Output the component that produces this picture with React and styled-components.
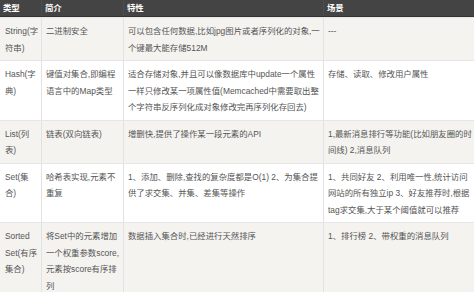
import React from 'react';
import styled, { createGlobalStyle } from 'styled-components';

const GlobalStyle = createGlobalStyle`
  html, body {
    margin: 0;
    padding: 0;
    background: #ffffff;
  }
  body {
    font-family: "Liberation Sans", "Noto Sans CJK SC", sans-serif;
  }
`;

const Table = styled.div`
  width: 474px;
  font-size: 8.4px;
  color: #555555;
`;

const Row = styled.div`
  display: grid;
  grid-template-columns: 41px 82px 200px 151px;
  background: ${(p) => (p.$shade ? '#f4f3f0' : '#ffffff')};
  border-top: 1px solid #e6e6e6;
`;

const HeadRow = styled(Row)`
  height: 17px;
  background: #444444;
  border-top: none;
  border-bottom: 1px solid #333333;
  box-sizing: border-box;
`;

const HeadCell = styled.div`
  color: #ffffff;
  font-weight: bold;
  line-height: 16px;
  padding: 0 2px 0 3px;
  border-left: 1px solid #4c4c4c;
  &:first-child {
    border-left: none;
  }
`;

const Cell = styled.div`
  line-height: 16.5px;
  padding: 5px 2px 4px 4px;
  border-left: 1px solid #e2e2e2;
  overflow-wrap: anywhere;
  &:first-child {
    border-left: none;
    padding-left: 5px;
    padding-right: 2.5px;
  }
`;

const rows = [
  ['String(字符串)', '二进制安全', '可以包含任何数据,比如jpg图片或者序列化的对象,一个键最大能存储512M', '---'],
  ['Hash(字典)', '键值对集合,即编程语言中的Map类型', '适合存储对象,并且可以像数据库中update一个属性一样只修改某一项属性值(Memcached中需要取出整个字符串反序列化成对象修改完再序列化存回去)', '存储、读取、修改用户属性'],
  ['List(列表)', '链表(双向链表)', '增删快,提供了操作某一段元素的API', '1,最新消息排行等功能(比如朋友圈的时间线) 2,消息队列'],
  ['Set(集合)', '哈希表实现,元素不重复', '1、添加、删除,查找的复杂度都是O(1) 2、为集合提供了求交集、并集、差集等操作', '1、共同好友 2、利用唯一性,统计访问网站的所有独立ip 3、好友推荐时,根据tag求交集,大于某个阈值就可以推荐'],
  ['Sorted Set(有序集合)', '将Set中的元素增加一个权重参数score,元素按score有序排列', '数据插入集合时,已经进行天然排序', '1、排行榜 2、带权重的消息队列'],
];

const headers = ['类型', '简介', '特性', '场景'];

export default function App() {
  return (
    <>
      <GlobalStyle />
      <Table>
        <HeadRow>
          {headers.map((h) => (
            <HeadCell key={h}>{h}</HeadCell>
          ))}
        </HeadRow>
        {rows.map((r, i) => (
          <Row key={i} $shade={i % 2 === 0}>
            {r.map((c, j) => (
              <Cell key={j}>{c}</Cell>
            ))}
          </Row>
        ))}
      </Table>
    </>
  );
}
